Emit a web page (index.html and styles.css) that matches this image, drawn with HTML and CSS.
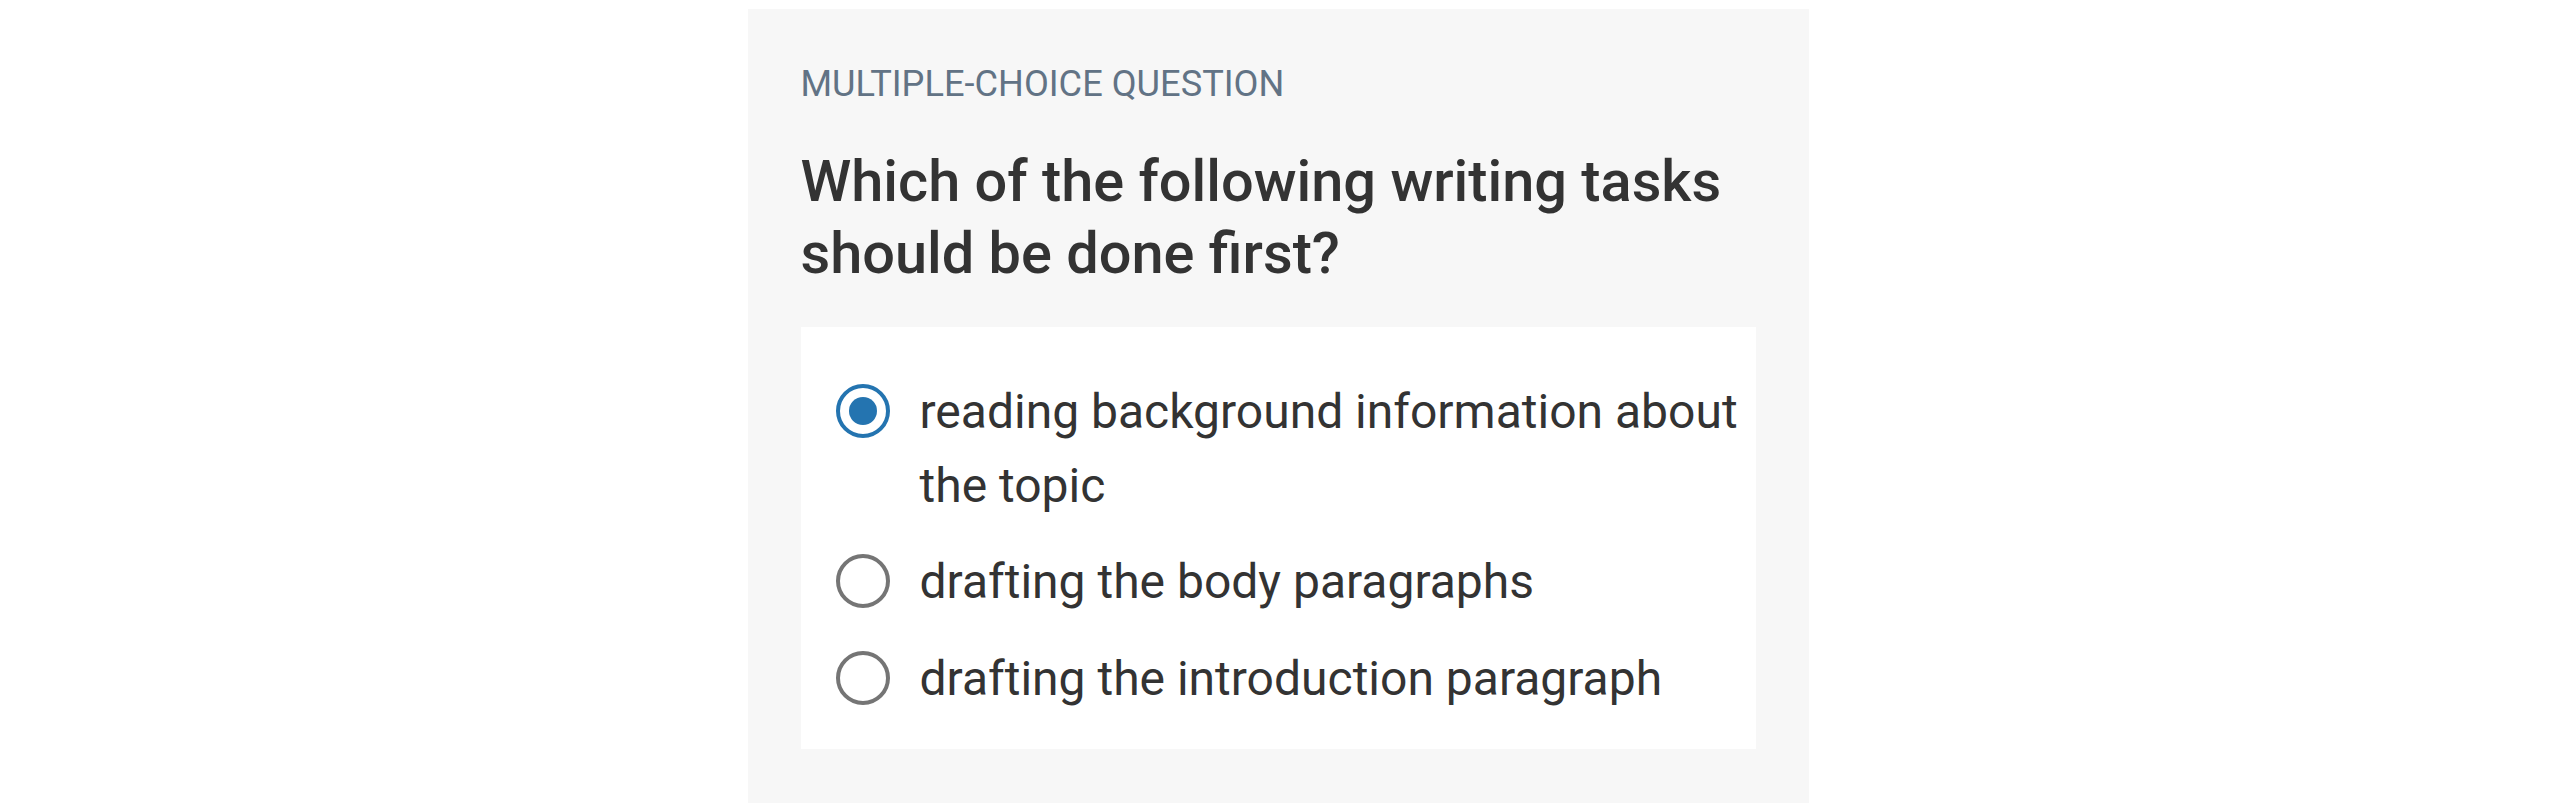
FILE: index.html
```html
<!DOCTYPE html>
<html lang="en">
<head>
<meta charset="utf-8">
<title>Multiple-choice question</title>
<link rel="stylesheet" href="styles.css">
</head>
<body>
<main class="card">
  <p class="eyebrow">MULTIPLE-CHOICE QUESTION</p>
  <h1 class="question">Which of the following writing tasks should be done first?</h1>
  <div class="choices">
    <label class="choice">
      <span class="radio radio--checked"><span class="radio-dot"></span></span>
      <span class="choice-text">reading background information about the topic</span>
    </label>
    <label class="choice">
      <span class="radio"></span>
      <span class="choice-text">drafting the body paragraphs</span>
    </label>
    <label class="choice">
      <span class="radio"></span>
      <span class="choice-text">drafting the introduction paragraph</span>
    </label>
  </div>
</main>
</body>
</html>
```

FILE: styles.css
```css
html, body {
  margin: 0;
  padding: 0;
  background: #ffffff;
}

body {
  font-family: Roboto, "Liberation Sans", Arial, sans-serif;
  color: #333333;
}

.card {
  box-sizing: border-box;
  width: 1061px;
  min-height: 794px;
  margin: 9px auto 0;
  padding: 47px 53px 60px;
  background: #f7f7f7;
}

.eyebrow {
  margin: 0;
  font-size: 36.2px;
  line-height: 56px;
  font-weight: 400;
  color: #627385;
}

.question {
  margin: 33px 0 0;
  font-size: 57.7px;
  line-height: 72px;
  font-weight: 500;
  color: #333333;
}

.choices {
  margin-top: 38px;
  background: #ffffff;
  padding: 48px 0 34px 35px;
  display: flex;
  flex-direction: column;
  gap: 23px;
}

.choice {
  display: flex;
  align-items: flex-start;
  gap: 30px;
  font-size: 48px;
  line-height: 73.5px;
  color: #333333;
}

.radio {
  box-sizing: border-box;
  flex: 0 0 auto;
  width: 54px;
  height: 54px;
  margin-top: 9px;
  border: 4px solid #757575;
  border-radius: 50%;
  display: flex;
  align-items: center;
  justify-content: center;
}

.radio--checked {
  border-color: #2474b0;
}

.radio-dot {
  width: 28px;
  height: 28px;
  border-radius: 50%;
  background: #2474b0;
}

.choice-text {
  flex: 1 1 auto;
}
```
